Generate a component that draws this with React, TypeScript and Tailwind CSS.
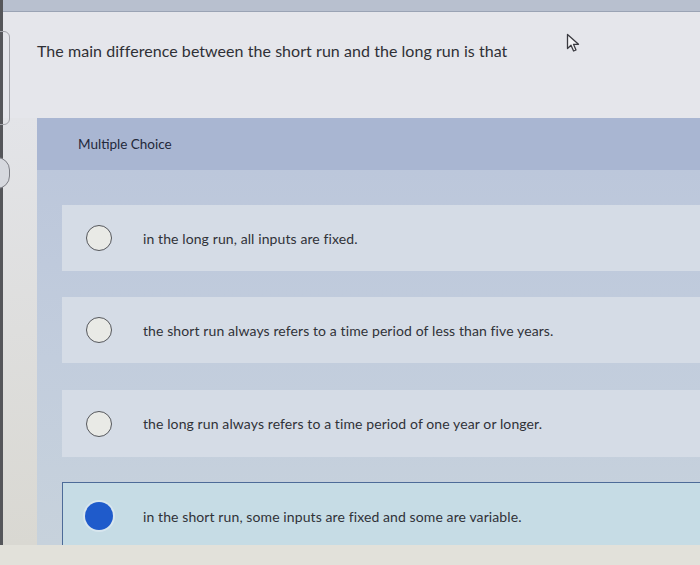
import React from 'react';

const options = [
  { id: 'a', text: 'in the long run, all inputs are fixed.', cls: 'h-[66px]' },
  { id: 'b', text: 'the short run always refers to a time period of less than five years.', cls: 'h-[66px] mt-[26px]' },
  { id: 'c', text: 'the long run always refers to a time period of one year or longer.', cls: 'h-[67px] mt-[27px]' },
  { id: 'd', text: 'in the short run, some inputs are fixed and some are variable.', cls: 'h-[68px] mt-[25px]', selected: true },
];

function Cursor() {
  return (
    <svg width="15" height="20" viewBox="0 0 15 20" className="absolute left-[566px] top-[33px]">
      <path
        d="M1.5 1.5 L1.5 15.5 L5 12.2 L7.6 18 L10 17 L7.5 11.3 L12.5 11.3 Z"
        fill="#f4f4f6"
        stroke="#3a3a40"
        strokeWidth="1.3"
        strokeLinejoin="round"
      />
    </svg>
  );
}

export default function App() {
  return (
    <div className="relative w-[700px] h-[565px] overflow-hidden bg-[#e5e6eb] font-['Lato','Liberation_Sans',sans-serif] text-[#2f3036]">
      {/* screen edges from the photo */}
      <div className="absolute left-0 top-0 w-[3px] h-[545px] bg-[#55565a]" />
      <div className="absolute left-[-12px] top-[31px] w-[22px] h-[94px] rounded-[6px] border border-[#a3a4aa]" />
      <div className="absolute left-[-16px] top-[157px] w-[26px] h-[32px] rounded-full border border-[#7c7d84] bg-[#d6d8de]" />

      <div className="flex flex-col h-full">
        <div className="h-[12px] bg-[#b8c0cf] border-b border-[#9aa3b4]" />

        <div className="pl-[37px] pt-[29px] h-[106px]">
          <p className="text-[16px] leading-[20px] tracking-[0.05px]">
            The main difference between the short run and the long run is that
          </p>
        </div>

        <div className="flex flex-1 min-h-0 bg-linear-to-b from-[#e3e4e8] to-[#d9d8d2]">
          <div className="w-[37px] shrink-0" />
          <div className="flex-1 flex flex-col min-h-0">
            <div className="h-[52px] shrink-0 bg-[#a9b6d2] flex items-center pl-[41px]">
              <span className="text-[13.5px] text-[#23283a]">Multiple Choice</span>
            </div>
            <div className="flex-1 min-h-0 overflow-hidden bg-linear-to-b from-[#bcc7db] via-[#c2cddd] to-[#c7d2dc] pt-[35px] pl-[25px] flex flex-col">
              {options.map((o) =>
                o.selected ? (
                  <div
                    key={o.id}
                    className={`${o.cls} shrink-0 bg-[#c6dce5] border border-[#4d6b98] border-r-0 flex items-center pl-[22px]`}
                  >
                    <span className="w-[28px] h-[28px] rounded-full bg-[#1f5bcb] ring-2 ring-[#d8e6ee] shrink-0" />
                    <span className="ml-[30px] text-[14px] tracking-[0.1px] text-[#303238]">{o.text}</span>
                  </div>
                ) : (
                  <div key={o.id} className={`${o.cls} shrink-0 bg-[#d5dce6] flex items-center pl-[24px]`}>
                    <span className="w-[26px] h-[26px] rounded-full border-[1.5px] border-[#55575c] bg-[#e9eae6] shrink-0" />
                    <span className="ml-[31px] text-[14px] tracking-[0.1px] text-[#303238]">{o.text}</span>
                  </div>
                )
              )}
            </div>
          </div>
        </div>

        <div className="h-[20px] shrink-0 bg-[#e2e1da]" />
      </div>

      <Cursor />
    </div>
  );
}
